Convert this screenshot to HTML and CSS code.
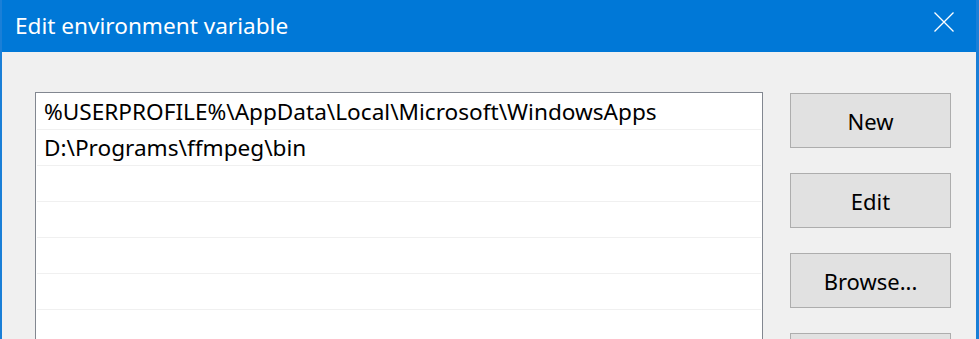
FILE: index.html
```html
<!DOCTYPE html>
<html>
<head>
<meta charset="utf-8">
<title>Edit environment variable</title>
<link rel="stylesheet" href="styles.css">
</head>
<body>
<div class="fenetre">
	<div class="titre">
		<span class="titre-texte">Edit environment variable</span>
		<span class="fermer">
			<svg width="20" height="20" viewBox="0 0 20 20"><path d="M0.5 0.5 L19.5 19.5 M19.5 0.5 L0.5 19.5" stroke="#fff" stroke-width="1.3" fill="none"/></svg>
		</span>
	</div>

	<div class="contenu">
		<div class="liste">
			<div class="ligne">%USERPROFILE%\AppData\Local\Microsoft\WindowsApps</div>
			<div class="ligne">D:\Programs\ffmpeg\bin</div>
			<div class="ligne"></div>
			<div class="ligne"></div>
			<div class="ligne"></div>
			<div class="ligne"></div>
			<div class="ligne"></div>
		</div>

		<div class="boutons">
			<button class="bouton">New</button>
			<button class="bouton">Edit</button>
			<button class="bouton">Browse...</button>
			<button class="bouton">Delete</button>
		</div>
	</div>
</div>
</body>
</html>
```

FILE: styles.css
```css
body {
margin: 0;
background-color: #f0f0f0;
font-family: "Noto Sans", "Open Sans", sans-serif;
overflow: hidden;
}
.fenetre {
height: 339px;
border-left: 2px solid #1a7fd7;
border-right: 3px solid #1a7fd7;
background-color: #f0f0f0;
overflow: hidden;
}
.titre {
height: 52px;
background-color: #0078d7;
color: white;
display: flex;
align-items: center;
justify-content: space-between;
padding-left: 13px;
padding-right: 22px;
}
.titre-texte {
font-size: 22.6px;
margin-top: -2px;
}
.fermer {
display: flex;
margin-top: -8px;
}
.contenu {
display: flex;
padding-top: 40px;
padding-left: 33px;
}
.liste {
width: 726px;
height: 300px;
border: 1px solid #828790;
background-color: white;
padding-top: 1px;
}
.ligne {
height: 36px;
box-sizing: border-box;
margin: 0 1px;
border-bottom: 1px solid #f0f0f0;
padding-left: 7px;
padding-top: 1px;
font-size: 22.6px;
line-height: 34px;
color: #000;
white-space: nowrap;
}
.boutons {
display: flex;
flex-direction: column;
gap: 25px;
margin-left: 27px;
padding-top: 1px;
}
.bouton {
width: 161px;
height: 55px;
background-color: #e1e1e1;
border: 1px solid #adadad;
font-family: inherit;
font-size: 22px;
color: #000;
padding: 0;
}
```
